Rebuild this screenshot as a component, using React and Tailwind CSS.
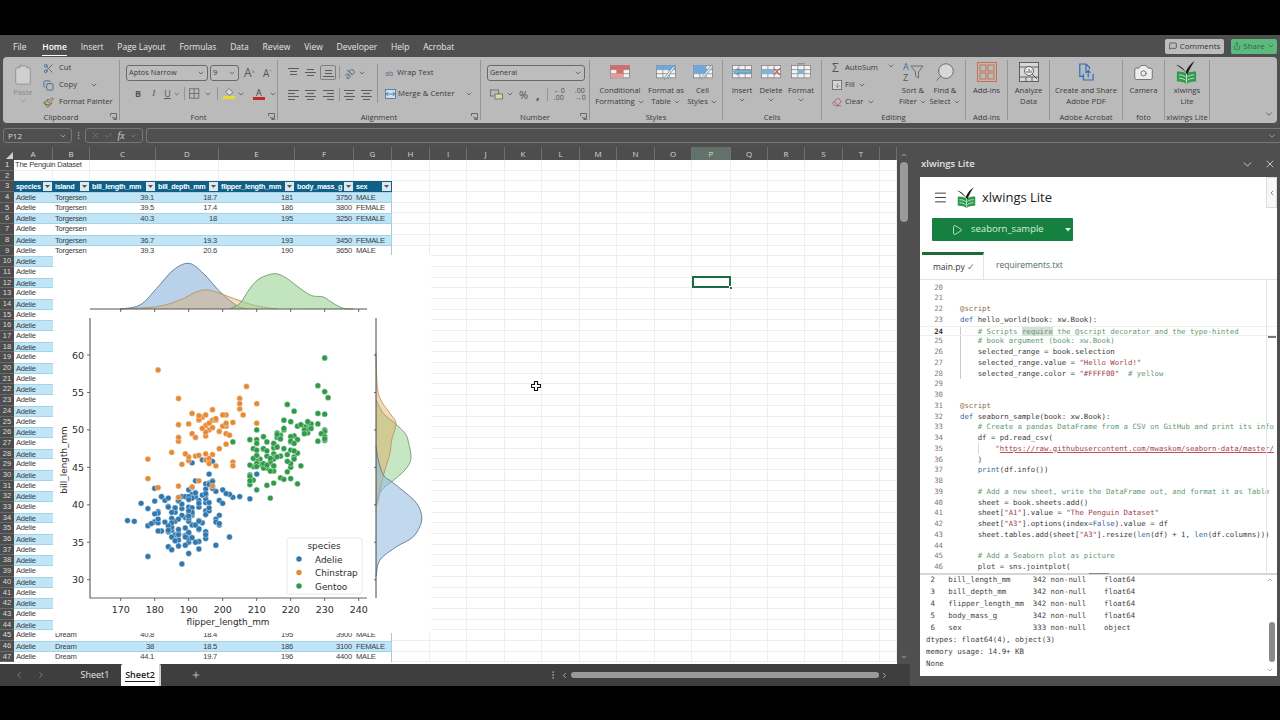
import { Scissors, Copy, Paintbrush, ChevronDown, ChevronLeft, ChevronRight, ChevronUp, X, Check, Plus, Play, Menu, MessageSquare, Share, Camera, Search, Clipboard, Eraser, ArrowDown, MoreVertical } from 'lucide-react';

// ---------- sheet data ----------
const columns = [
  ['A', 'w-[39px]'], ['B', 'w-[37px]'], ['C', 'w-[66px]'], ['D', 'w-[63px]'], ['E', 'w-[76px]'],
  ['F', 'w-[59px]'], ['G', 'w-[38px]'], ['H', 'w-[38px]'], ['I', 'w-[37px]'], ['J', 'w-[38px]'],
  ['K', 'w-[37px]'], ['L', 'w-[38px]'], ['M', 'w-[37px]'], ['N', 'w-[38px]'], ['O', 'w-[37px]'],
  ['P', 'w-[39px]'], ['Q', 'w-[37px]'], ['R', 'w-[37px]'], ['S', 'w-[38px]'], ['T', 'w-[37px]'],
  ['', 'w-[17px]'],
];
const tableHead = ['species', 'island', 'bill_length_mm', 'bill_depth_mm', 'flipper_length_mm', 'body_mass_g', 'sex'];
const tableRows = {
  4: ['Adelie', 'Torgersen', '39.1', '18.7', '181', '3750', 'MALE'],
  5: ['Adelie', 'Torgersen', '39.5', '17.4', '186', '3800', 'FEMALE'],
  6: ['Adelie', 'Torgersen', '40.3', '18', '195', '3250', 'FEMALE'],
  7: ['Adelie', 'Torgersen', '', '', '', '', ''],
  8: ['Adelie', 'Torgersen', '36.7', '19.3', '193', '3450', 'FEMALE'],
  9: ['Adelie', 'Torgersen', '39.3', '20.6', '190', '3650', 'MALE'],
  45: ['Adelie', 'Dream', '40.8', '18.4', '195', '3900', 'MALE'],
  46: ['Adelie', 'Dream', '38', '18.5', '186', '3100', 'FEMALE'],
  47: ['Adelie', 'Dream', '44.1', '19.7', '196', '4400', 'MALE'],
};
const rowNumbers = Array.from({ length: 47 }, (_, i) => i + 1);

const adelie = [[181,39.1],[186,39.5],[195,40.3],[193,36.7],[190,39.3],[181,38.9],[195,39.2],[193,34.1],[190,42],[186,37.8],[180,37.8],[182,41.1],[191,38.6],[198,34.6],[185,36.6],[195,38.7],[197,42.5],[184,34.4],[194,46],[174,37.8],[180,37.7],[189,35.9],[185,38.2],[180,38.8],[187,35.3],[183,40.6],[187,40.5],[172,37.9],[180,40.5],[178,39.5],[178,37.2],[188,39.5],[184,40.9],[195,36.4],[196,39.2],[190,38.8],[180,42.2],[181,37.6],[184,39.8],[182,36.5],[195,40.8],[186,36],[196,44.1],[185,37],[190,39.6],[182,41.1],[179,37.5],[190,36],[191,42.3],[186,39.6],[188,40.1],[190,35],[200,42],[187,34.5],[191,41.4],[186,39],[193,40.6],[181,36.5],[194,37.6],[185,35.7],[195,41.3],[185,37.6],[192,41.1],[184,36.4],[192,41.6],[195,35.5],[188,41.1],[190,35.9],[198,41.8],[190,33.5],[190,39.7],[196,39.6],[197,45.8],[190,35.5],[195,42.8],[191,40.9],[184,37.2],[187,36.2],[195,42.1],[189,34.6],[196,42.9],[187,36.7],[193,35.1],[191,37.3],[194,41.3],[190,36.3],[189,36.9],[189,38.3],[190,38.9],[202,35.7],[205,41.1],[185,34],[186,39.6],[208,40.8],[190,38.1],[196,40.3],[178,33.1],[192,43.2],[192,35],[203,41],[183,37.7],[190,37.8],[193,37.9],[184,39.7],[199,38.6],[190,38.2],[181,38.1],[197,43.2],[198,38.1],[191,45.6],[193,39.7],[197,42.2],[191,39.6],[196,42.7],[188,38.6],[199,37.3],[189,35.7],[189,41.1],[198,37.7],[176,40.2],[202,41.4],[186,35.2],[199,40.6],[191,38.8],[195,41.5],[191,39],[210,44.1],[190,38.5],[197,43.1],[193,36.8],[199,37.5],[187,38.1],[190,41.1],[191,35.6],[200,40.2],[193,39.7],[193,40.2],[187,40.6],[188,32.1],[190,40.7],[192,37.3],[185,39],[190,39.2],[184,36.6],[195,36],[193,37.8],[187,36],[201,41.5]];
const chinstrap = [[192,46.5],[196,50],[193,51.3],[188,45.4],[197,52.7],[198,45.2],[178,46.1],[197,51.3],[195,46],[198,51.3],[193,46.6],[194,51.7],[185,47],[201,52],[190,45.9],[201,50.5],[197,50.3],[181,58],[190,46.4],[195,49.2],[191,42.4],[187,48.5],[193,43.2],[195,50.6],[197,46.7],[200,52],[200,50.5],[191,49.5],[205,52.8],[187,54.2],[201,49.5],[187,42.5],[203,51],[195,49.7],[199,47.5],[195,52],[210,53.5],[192,49],[205,54.2],[210,50.9],[187,49],[196,46.2],[196,50.9],[196,45.5],[201,50.9],[190,50.8],[207,55.8],[187,41],[198,51.5],[199,49.8],[201,48.1],[193,51.4],[203,45.7],[187,50.7],[197,42.5],[191,52.2],[203,45.2],[202,49.3],[194,50.2],[205,53.5],[189,46.8],[195,46.8],[206,52],[193,51.9],[178,43.5],[181,42.3]];
const gentoo = [[211,46.1],[230,50],[210,48.7],[218,50],[215,47.6],[210,46.5],[211,45.4],[219,46.7],[209,43.3],[215,46.8],[214,40.9],[216,49],[214,45.5],[213,48.4],[210,45.8],[217,49.3],[210,42],[221,49.2],[209,46.2],[222,48.7],[218,50.2],[215,45.1],[213,46.5],[215,46.3],[215,42.9],[215,46.1],[215,44.5],[216,47.8],[215,48.2],[210,50],[220,47.3],[222,42.8],[209,45.1],[230,59.6],[220,49.1],[220,48.4],[213,42.6],[219,44.4],[208,44],[208,48.7],[208,42.7],[225,49.6],[210,45.3],[216,49.6],[222,50.5],[217,43.6],[210,45.5],[225,50.5],[213,44.9],[215,45.2],[210,46.6],[220,48.5],[210,45.1],[225,50.1],[217,46.5],[220,45],[208,43.8],[220,45.5],[208,43.2],[224,50.4],[208,45.3],[221,46.2],[214,45.7],[231,54.3],[219,45.8],[230,49.8],[214,46.2],[229,49.5],[220,43.5],[223,50.7],[216,47.7],[221,46.4],[221,48.2],[217,46.5],[216,46.4],[230,48.6],[209,47.5],[220,51.1],[215,45.2],[223,45.2],[212,49.1],[221,52.5],[212,47.4],[224,50],[212,44.9],[228,50.8],[218,43.4],[218,51.3],[212,47.5],[230,52.1],[218,47.5],[228,52.2],[212,45.5],[224,49.5],[214,44.5],[226,50.8],[216,49.4],[222,46.9],[203,48.4],[225,51.1],[228,48.5],[228,55.9],[213,47.2],[230,49.1],[210,47.3],[230,48.8],[219,53.4],[230,55.1],[221,46.1],[226,50.2],[213,45.3],[217,48.8],[221,47.2],[210,48.2]];

const px = v => 120.7 + (v - 170) * 3.4;
const py = v => 355 + (60 - v) * 7.49;

// smooth curve through points, given in [x, y] pairs of the image's own pixels
const smooth = pts => {
  let d = `M${pts[0][0]} ${pts[0][1]}`;
  for (let i = 0; i < pts.length - 1; i++) {
    const p0 = pts[i - 1] || pts[i];
    const p1 = pts[i];
    const p2 = pts[i + 1];
    const p3 = pts[i + 2] || p2;
    d += `C${p1[0] + (p2[0] - p0[0]) / 6} ${p1[1] + (p2[1] - p0[1]) / 6} ${p2[0] - (p3[0] - p1[0]) / 6} ${p2[1] - (p3[1] - p1[1]) / 6} ${p2[0]} ${p2[1]}`;
  }
  return d;
};
const topCurve = pts => pts.map(([x, y]) => [x / 3, 145 + y / 3]);
const sideCurve = pts => pts.map(([x, y]) => [80 + x / 3, 320 + y / 3]);

const topBlue = topCurve([[360,492],[420,480],[470,430],[520,375],[567,355],[610,385],[660,440],[710,482],[740,491]]);
const topOrange = topCurve([[360,492],[470,485],[540,465],[590,440],[625,435],[660,445],[700,460],[760,480],[830,492]]);
const topGreen = topCurve([[690,491],[720,475],[750,430],[780,400],[825,386],[860,400],[900,430],[935,452],[970,456],[1000,475],[1030,490],[1060,492]]);
const sideBlue = sideCurve([[888,770],[900,720],[950,680],[1000,650],[1025,600],[1010,550],[960,505],[935,485],[910,465],[895,420],[888,380]]);
const sideOrange = sideCurve([[888,100],[895,220],[930,280],[948,310],[935,360],[930,400],[915,450],[905,490],[895,540],[888,560]]);
const sideGreen = sideCurve([[888,550],[905,510],[935,485],[975,450],[993,415],[985,365],[975,340],[945,310],[910,280],[888,240]]);

// ---------- code pane ----------
const tone = {
  c: 'text-[#5e9a72]', k: 'text-[#3b5fa8]', s: 'text-[#a3424a]', d: 'text-[#8a6a42]', n: 'text-[#2f6f9f]', t: 'text-[#3a3a3a]',
  u: 'text-[#a3424a] underline decoration-[#c0504d]', h: 'text-[#5e9a72] bg-[#d5dfd8]',
};
const code = [
  [20, []], [21, []],
  [22, [['d', '@script']]],
  [23, [['k', 'def'], ['t', ' hello_world(book: xw.Book):']]],
  [24, [['c', '    # Scripts '], ['h', 'require'], ['c', ' the @script decorator and the type-hinted']]],
  [25, [['c', '    # book argument (book: xw.Book)']]],
  [26, [['t', '    selected_range = book.selection']]],
  [27, [['t', '    selected_range.value = '], ['s', '"Hello World!"']]],
  [28, [['t', '    selected_range.color = '], ['s', '"#FFFF00"'], ['c', '  # yellow']]],
  [29, []], [30, []],
  [31, [['d', '@script']]],
  [32, [['k', 'def'], ['t', ' seaborn_sample(book: xw.Book):']]],
  [33, [['c', '    # Create a pandas DataFrame from a CSV on GitHub and print its info']]],
  [34, [['t', '    df = pd.read_csv(']]],
  [35, [['s', '        "'], ['u', 'https://raw.githubusercontent.com/mwaskom/seaborn-data/master/']]],
  [36, [['t', '    )']]],
  [37, [['n', '    print'], ['t', '(df.info())']]],
  [38, []],
  [39, [['c', '    # Add a new sheet, write the DataFrame out, and format it as Table']]],
  [40, [['t', '    sheet = book.sheets.add()']]],
  [41, [['t', '    sheet['], ['s', '"A1"'], ['t', '].value = '], ['s', '"The Penguin Dataset"']]],
  [42, [['t', '    sheet['], ['s', '"A3"'], ['t', '].options(index='], ['k', 'False'], ['t', ').value = df']]],
  [43, [['t', '    sheet.tables.add(sheet['], ['s', '"A3"'], ['t', '].resize('], ['n', 'len'], ['t', '(df) + 1, '], ['n', 'len'], ['t', '(df.columns)))']]],
  [44, []],
  [45, [['c', '    # Add a Seaborn plot as picture']]],
  [46, [['t', '    plot = sns.jointplot(']]],
];
const consoleLines = [
  ' 2   bill_length_mm     342 non-null    float64',
  ' 3   bill_depth_mm      342 non-null    float64',
  ' 4   flipper_length_mm  342 non-null    float64',
  ' 5   body_mass_g        342 non-null    float64',
  ' 6   sex                333 non-null    object',
  'dtypes: float64(4), object(3)',
  'memory usage: 14.9+ KB',
  'None',
];

// ---------- small ribbon helpers ----------
const Chev = ({ className = 'text-[#444]' }) => <ChevronDown size={8} strokeWidth={2} className={className} />;

const AlignIcon = ({ rows }) => (
  <svg width="13" height="11" viewBox="0 0 13 11" stroke="#5a5a5a" strokeWidth="1">
    {rows.map(([x1, x2, y]) => <line key={y} x1={x1} x2={x2} y1={y + 0.5} y2={y + 0.5} />)}
  </svg>
);
const alignSet = {
  top: [[1, 12, 1], [3, 10, 4], [3, 10, 7]],
  mid: [[3, 10, 2], [1, 12, 5], [3, 10, 8]],
  bot: [[3, 10, 3], [3, 10, 6], [1, 12, 9]],
  left: [[1, 12, 1], [1, 8, 4], [1, 12, 7], [1, 8, 10]],
  center: [[1, 12, 1], [3, 10, 4], [1, 12, 7], [3, 10, 10]],
  right: [[1, 12, 1], [5, 12, 4], [1, 12, 7], [5, 12, 10]],
};

const TableIcon = ({ children }) => (
  <svg width="22" height="18" viewBox="0 0 30 24">{children}</svg>
);
const Cells = ({ fill = '#f2f2f2' }) => (
  <g>
    <rect x="2" y="3" width="26" height="17" fill={fill} stroke="#666" strokeWidth="0.8" />
    <path d="M2 8.7h26M2 14.3h26M10.7 3v17M19.3 3v17" stroke="#666" strokeWidth="0.8" />
  </g>
);

const BigBtn = ({ icon, lines, chevron, className = '', chevronAlone }) => (
  <div className={`flex flex-col items-center shrink-0 ${className}`}>
    <div className="h-[24px] flex items-center justify-center">{icon}</div>
    <div className="mt-[1px] flex flex-col items-center text-[7.7px] leading-[11px] text-[#3a3a3a] whitespace-nowrap">
      {lines.map((l, i) => (
        <div key={l} className="flex items-center gap-[2px]">
          {l}{chevron && i === lines.length - 1 && <Chev />}
        </div>
      ))}
      {chevronAlone && <Chev />}
    </div>
  </div>
);

const Group = ({ className, label, launcher, children }) => (
  <div className={`relative mt-[3px] mb-[3px] flex flex-col shrink-0 border-r border-[#959595] ${className}`}>
    <div className="flex-1 min-h-0">{children}</div>
    <div className="h-[6px] text-center text-[7.7px] leading-[6px] text-[#3a3a3a] whitespace-nowrap">{label}</div>
    {launcher && (
      <svg className="absolute right-[2px] bottom-0" width="7" height="7" viewBox="0 0 7 7" fill="none" stroke="#555" strokeWidth="0.8">
        <path d="M0.5 3V0.5H6.5V6.5H4M2 4l3 2M5 4v2H3" />
      </svg>
    )}
  </div>
);

const Select = ({ children, className }) => (
  <div className={`h-[16px] flex items-center justify-between px-[2px] rounded-[3px] border border-[#6a6a6a] bg-[#bdbdbd] text-[7.4px] text-[#3a3a3a] ${className}`}>
    <span>{children}</span><Chev />
  </div>
);

const Logo = ({ size = 24 }) => (
  <svg width={size} height={size} viewBox="0 0 24 24">
    <path d="M2 11c3.500-.5 7 .3 10 2.200C15 11.300 18.500 10.500 22 11v10.500c-3.500-.5-7 .3-10 2.200-3-1.900-6.500-2.700-10-2.200z" fill="#2e9a4c" />
    <path d="M12 13v10M4 14.500c3 0 5 .7 7 2M4 18c3 0 5 .7 7 2M20 14.500c-3 0-5 .7-7 2M20 18c-3 0-5 .7-7 2" stroke="#d9efe0" strokeWidth="0.9" fill="none" />
    <path d="M1 4c4 .5 7 3 10 7.500C13 7 16 3 20.500 0c-2.500 3.500-5 8-7.500 14C9.500 10 5.500 6.500 1 4z" fill="#1c1c1c" />
  </svg>
);

function Ribbon() {
  return (
    <div className="mx-[3px] h-[66px] rounded-[4px] bg-[#bababa] flex shrink-0">
      <Group className="w-[117px]" label="Clipboard" launcher>
        <div className="flex pt-[2px]">
          <div className="w-[40px] pt-[2px] flex flex-col items-center text-[7.4px] text-[#8a8a8a]">
            <Clipboard size={22} strokeWidth={1} className="text-[#8d8d8d] fill-[#cfcfcf]" />
            <span className="mt-[1px] leading-[10px]">Paste</span>
            <Chev className="text-[#8a8a8a]" />
          </div>
          <div className="flex flex-col gap-[5px] text-[7.7px] text-[#3a3a3a]">
            <div className="h-[12px] flex items-center gap-[5px]"><Scissors size={11} className="text-[#4a6a8a]" /><span>Cut</span></div>
            <div className="h-[12px] flex items-center gap-[5px]"><Copy size={11} className="text-[#4a6a8a]" /><span>Copy</span><span className="ml-[8px]"><Chev /></span></div>
            <div className="h-[12px] flex items-center gap-[5px]"><Paintbrush size={11} className="text-[#77652c]" /><span>Format Painter</span></div>
          </div>
        </div>
      </Group>

      <Group className="w-[158px]" label="Font" launcher>
        <div className="pl-[6px] pt-[5px] flex items-center gap-[2px]">
          <Select className="w-[82px]">Aptos Narrow</Select>
          <Select className="w-[29px]">9</Select>
          <span className="ml-[3px] text-[12px] leading-none text-[#555]">A<sup className="text-[6px]">^</sup></span>
          <span className="ml-[6px] text-[10px] leading-none text-[#555]">A<sup className="text-[6px]">ˇ</sup></span>
        </div>
        <div className="pl-[10px] pt-[6px] flex items-center text-[9px] text-[#555]">
          <span className="w-[17px] text-center font-bold">B</span>
          <span className="w-[17px] text-center italic" style={{ fontFamily: '"Liberation Serif", serif' }}>I</span>
          <span className="w-[12px] text-center underline">U</span>
          <Chev />
          <span className="w-px h-[13px] bg-[#949494] mx-[3px]" />
          <svg className="ml-[2px]" width="11" height="11" viewBox="0 0 11 11" fill="none" stroke="#666" strokeWidth="0.9"><rect x="0.5" y="0.5" width="10" height="10" /><path d="M5.500.5v10M.5 5.500h10" /></svg>
          <span className="ml-[4px]"><Chev /></span>
          <span className="w-px h-[13px] bg-[#949494] mx-[5px]" />
          <div className="flex flex-col items-center w-[13px]">
            <svg width="10" height="8" viewBox="0 0 10 8"><path d="M5 .5 9 4.500 5.500 7.500 1.500 4z" fill="#d8d8d8" stroke="#666" strokeWidth="0.8" /></svg>
            <div className="w-[12px] h-[3px] bg-[#e6dd30]" />
          </div>
          <span className="ml-[2px]"><Chev /></span>
          <div className="ml-[8px] flex flex-col items-center w-[13px] leading-[9px]">
            <span className="text-[9px] text-[#444]">A</span>
            <div className="w-[12px] h-[3px] bg-[#c8242b]" />
          </div>
          <span className="ml-[4px]"><Chev /></span>
        </div>
      </Group>

      <Group className="w-[203px]" label="Alignment" launcher>
        <div className="flex">
          <div className="pl-[8px] pt-[5px] flex flex-col gap-[7px]">
            <div className="flex items-center h-[15px] gap-[3px]">
              <div className="w-[14px] flex justify-center"><AlignIcon rows={alignSet.top} /></div>
              <div className="w-[14px] flex justify-center"><AlignIcon rows={alignSet.mid} /></div>
              <div className="w-[16px] h-[15px] flex items-center justify-center rounded-[2px] border border-[#7f7f7f]"><AlignIcon rows={alignSet.bot} /></div>
              <span className="w-px h-[13px] bg-[#949494]" />
              <span className="text-[10px] text-[#4a6a8a] leading-none -rotate-45">ab</span>
              <Chev />
            </div>
            <div className="flex items-center h-[15px] gap-[3px]">
              <div className="w-[14px] flex justify-center"><AlignIcon rows={alignSet.left} /></div>
              <div className="w-[14px] flex justify-center"><AlignIcon rows={alignSet.center} /></div>
              <div className="w-[16px] flex justify-center"><AlignIcon rows={alignSet.right} /></div>
              <span className="w-px h-[13px] bg-[#949494]" />
              <div className="flex justify-center"><AlignIcon rows={alignSet.center} /></div>
              <div className="ml-[1px] flex justify-center"><AlignIcon rows={alignSet.center} /></div>
            </div>
          </div>
          <div className="ml-[4px] mt-[4px] w-px h-[39px] bg-[#949494] shrink-0" />
          <div className="ml-[7px] pt-[7px] flex flex-col gap-[9px] text-[7.7px] text-[#3a3a3a] whitespace-nowrap">
            <div className="flex items-center gap-[2px] h-[12px]">
              <span className="w-[10px] text-[7px] leading-none text-[#4a6a8a]">ab</span><span>Wrap Text</span>
            </div>
            <div className="flex items-center gap-[2px] h-[12px]">
              <svg width="11" height="10" viewBox="0 0 11 10" fill="#cfe0ee" stroke="#3f6f9f" strokeWidth="0.8"><rect x=".5" y=".5" width="10" height="9" /><path d="M.5 5h10M3 3 1.500 5 3 7M8 3l1.500 2L8 7" fill="none" /></svg>
              <span>Merge &amp; Center</span>
              <span className="ml-[8px]"><Chev /></span>
            </div>
          </div>
        </div>
      </Group>

      <Group className="w-[109px]" label="Number" launcher>
        <div className="pl-[6px] pt-[5px]">
          <Select className="w-[98px]">General</Select>
          <div className="pt-[6px] pl-[3px] flex items-center text-[#4f4f4f]">
            <svg width="13" height="11" viewBox="0 0 13 11" fill="none" stroke="#666" strokeWidth="0.8"><rect x=".5" y="1" width="8" height="6" /><rect x="5" y="5" width="7.500" height="5" fill="#d8d8a8" /></svg>
            <span className="ml-[3px]"><Chev /></span>
            <span className="ml-[5px] text-[11px] leading-none">%</span>
            <span className="ml-[8px] text-[13px] leading-none font-bold">,</span>
            <span className="ml-[7px] w-px h-[13px] bg-[#949494]" />
            <span className="ml-[6px] text-[7px] leading-[7px] w-[14px]">←0<br />.00</span>
            <span className="ml-[7px] text-[7px] leading-[7px] w-[14px]">.00<br />→0</span>
          </div>
        </div>
      </Group>

      <Group className="w-[133px]" label="Styles">
        <div className="flex">
          <BigBtn className="w-[60px]" lines={['Conditional', 'Formatting']} chevron icon={
            <TableIcon><Cells /><rect x="2" y="3" width="26" height="5.500" fill="#d9686a" /><rect x="10.700" y="8.700" width="8.600" height="5.600" fill="#d9686a" /><rect x="2" y="14.300" width="17" height="5.700" fill="#e89a9a" /></TableIcon>
          } />
          <BigBtn className="w-[32px]" lines={['Format as', 'Table']} chevron icon={
            <TableIcon><Cells /><rect x="2" y="3" width="26" height="5.500" fill="#6fa8dc" /><path d="M27 6 16 20l-3 2 1-4L25 4z" fill="#dfe9f2" stroke="#4f7f9f" strokeWidth="0.8" /></TableIcon>
          } />
          <BigBtn className="w-[41px]" lines={['Cell', 'Styles']} chevron icon={
            <TableIcon><Cells /><rect x="2" y="3" width="17" height="11" fill="#6fa8dc" /><path d="M27 6 16 20l-3 2 1-4L25 4z" fill="#dfe9f2" stroke="#4f7f9f" strokeWidth="0.8" /></TableIcon>
          } />
        </div>
      </Group>

      <Group className="w-[99px]" label="Cells">
        <div className="flex">
          <BigBtn className="w-[38px]" lines={['Insert']} chevronAlone icon={
            <TableIcon><Cells /><path d="M3 11.500 9 7v2.500h18v4H9V16z" fill="#7fb3d8" stroke="#3f7fa8" strokeWidth="0.8" /></TableIcon>
          } />
          <BigBtn className="w-[20px]" lines={['Delete']} chevronAlone icon={
            <TableIcon><Cells /><rect x="2" y="8.700" width="17" height="5.600" fill="#7fb3d8" /><path d="M19 7l8 9M27 7l-8 9" stroke="#c25a5a" strokeWidth="1.500" /></TableIcon>
          } />
          <BigBtn className="w-[40px]" lines={['Format']} chevronAlone icon={
            <TableIcon><Cells /><rect x="10.700" y="8.700" width="8.600" height="5.600" fill="#7fb3d8" /><path d="M10 .8h10" stroke="#555" strokeWidth="0.8" /></TableIcon>
          } />
        </div>
      </Group>

      <Group className="w-[144px]" label="Editing">
        <div className="flex">
          <div className="w-[70px] pt-[2px] pl-[10px] flex flex-col gap-[5px] text-[7.7px] text-[#3a3a3a] shrink-0">
            <div className="h-[12px] flex items-center gap-[3px]"><span className="w-[10px] text-[12px] leading-none text-[#555]">Σ</span><span>AutoSum</span></div>
            <div className="h-[12px] flex items-center gap-[3px]"><span className="w-[10px] h-[10px] flex items-center justify-center border border-[#777] bg-[#d4d4d4]"><ArrowDown size={7} className="text-[#3f6f9f]" /></span><span>Fill</span><Chev /></div>
            <div className="h-[12px] flex items-center gap-[3px]"><Eraser size={10} className="text-[#b0526a]" /><span>Clear</span><Chev /></div>
          </div>
          <div className="w-[5px] pt-[2px] -ml-[5px]"><Chev /></div>
          <BigBtn className="w-[42px]" lines={['Sort &', 'Filter']} chevron icon={
            <svg width="22" height="24" viewBox="0 0 22 24" fill="none"><text x="1" y="10" fontSize="9" fill="#3f6f9f">A</text><text x="1" y="21" fontSize="9" fill="#555">Z</text><path d="M9 6h12l-4.500 6v6l-3-2v-4z" stroke="#666" strokeWidth="0.9" /></svg>
          } />
          <BigBtn className="w-[22px]" lines={['Find &', 'Select']} chevron icon={
            <Search size={22} strokeWidth={1} className="text-[#666] -scale-x-100 fill-[#d8d8d8]" />
          } />
        </div>
      </Group>

      <Group className="w-[42px]" label="Add-ins">
        <div className="flex justify-center">
          <BigBtn lines={['Add-ins']} icon={
            <svg width="20" height="20" viewBox="0 0 20 20" fill="none" stroke="#c9714f" strokeWidth="1"><rect x=".5" y=".5" width="19" height="19" /><rect x="3" y="3" width="6" height="6" /><rect x="11" y="3" width="6" height="6" /><rect x="3" y="11" width="6" height="6" /><rect x="11" y="11" width="6" height="6" /></svg>
          } />
        </div>
      </Group>

      <Group className="w-[42px]" label="">
        <div className="flex justify-center">
          <BigBtn lines={['Analyze', 'Data']} icon={
            <svg width="20" height="20" viewBox="0 0 20 20" fill="#d8d8d8" stroke="#555" strokeWidth="0.9"><rect x=".5" y=".5" width="19" height="19" /><path d="M.5 5h19M.5 15h19M7 15v4.500M13 15v4.500" /><circle cx="10" cy="9" r="4.500" fill="#ececec" /><path d="M8 11V9M10 11V7M12 11V8.500M13 12l5 5" /></svg>
          } />
        </div>
      </Group>

      <Group className="w-[73px]" label="Adobe Acrobat">
        <div className="flex justify-center">
          <BigBtn lines={['Create and Share', 'Adobe PDF']} icon={
            <svg width="16" height="18" viewBox="0 0 18 20" fill="none" stroke="#2b6cc4" strokeWidth="1.300"><path d="M9 11V1H2v14h4M9 1l4 4v2" /><path d="M6 12v7h11v-7M11.500 16V9M9 11l2.500-2.500L14 11" /></svg>
          } />
        </div>
      </Group>

      <Group className="w-[42px]" label="foto">
        <div className="flex justify-center">
          <BigBtn lines={['Camera']} icon={<Camera size={21} strokeWidth={1} className="text-[#666] fill-[#ededed]" />} />
        </div>
      </Group>

      <Group className="w-[45px]" label="xlwings Lite">
        <div className="flex justify-center">
          <BigBtn lines={['xlwings', 'Lite']} icon={<Logo size={23} />} />
        </div>
      </Group>

      <div className="flex-1 flex items-end justify-end pr-[3px] pb-[4px]"><ChevronDown size={10} className="text-[#555]" /></div>
    </div>
  );
}

function Chart() {
  const xs = [170, 180, 190, 200, 210, 220, 230, 240];
  const ys = [30, 35, 40, 45, 50, 55, 60];
  const dots = (list, fill) => list.map(([x, y], i) => (
    <circle key={i} cx={px(x)} cy={py(y)} r="2.900" fill={fill} stroke="#fff" strokeWidth="0.4" />
  ));
  return (
    <svg className="absolute left-[53px] top-[95px] bg-white" width="378" height="378" viewBox="53 255 378 378" fontFamily='"DejaVu Sans", sans-serif' fill="#2b2b2b">
      <path d={smooth(topBlue)} fill="#9dbfe0" fillOpacity="0.7" stroke="#587b95" strokeWidth="0.9" />
      <path d={smooth(topOrange)} fill="#e0a050" fillOpacity="0.35" stroke="#b59468" strokeWidth="0.9" />
      <path d={smooth(topGreen)} fill="#8fd08a" fillOpacity="0.55" stroke="#6f9a6f" strokeWidth="0.9" />
      <line x1="90" x2="367" y1="309" y2="309" stroke="#555" strokeWidth="1" />
      {xs.map(v => <line key={v} x1={px(v)} x2={px(v)} y1="309" y2="312" stroke="#444" strokeWidth="0.8" />)}

      <path d={smooth(sideGreen)} fill="#8fd08a" fillOpacity="0.5" stroke="#6f9a6f" strokeWidth="0.9" />
      <path d={smooth(sideOrange)} fill="#e0a050" fillOpacity="0.4" stroke="#b59468" strokeWidth="0.9" />
      <path d={smooth(sideBlue)} fill="#8fb8dc" fillOpacity="0.55" stroke="#587b95" strokeWidth="0.9" />
      <line x1="376" x2="376" y1="318" y2="598" stroke="#444" strokeWidth="1" />
      {ys.map(v => <line key={v} x1="374" x2="376" y1={py(v)} y2={py(v)} stroke="#444" strokeWidth="0.8" />)}

      <path d="M90 318V598H367" fill="none" stroke="#666" strokeWidth="1.200" />
      {xs.map(v => <line key={v} x1={px(v)} x2={px(v)} y1="598" y2="601" stroke="#444" strokeWidth="0.8" />)}
      {ys.map(v => <line key={v} x1="87" x2="90" y1={py(v)} y2={py(v)} stroke="#444" strokeWidth="0.8" />)}
      {xs.map(v => <text key={v} x={px(v)} y="613" fontSize="9.500" textAnchor="middle">{v}</text>)}
      {ys.map(v => <text key={v} x="84" y={py(v) + 3.500} fontSize="9.500" textAnchor="end">{v}</text>)}
      <text x="228" y="625" fontSize="8.900" textAnchor="middle">flipper_length_mm</text>
      <text x="67" y="460" fontSize="8.900" textAnchor="middle" transform="rotate(-90 67 460)">bill_length_mm</text>

      {dots(adelie, '#2f77ad')}
      {dots(chinstrap, '#e58b38')}
      {dots(gentoo, '#2f9a48')}

      <rect x="287" y="538" width="75" height="56" rx="2" fill="#fff" fillOpacity="0.85" stroke="#e2e2e2" strokeWidth="0.8" />
      <text x="324" y="549" fontSize="8.900" textAnchor="middle">species</text>
      <circle cx="299" cy="559" r="2.700" fill="#2f77ad" />
      <text x="315" y="562.500" fontSize="8.900">Adelie</text>
      <circle cx="299" cy="572.500" r="2.700" fill="#e58b38" />
      <text x="315" y="576" fontSize="8.900">Chinstrap</text>
      <circle cx="299" cy="586" r="2.700" fill="#2f9a48" />
      <text x="315" y="589.500" fontSize="8.900">Gentoo</text>
    </svg>
  );
}

function Sheet() {
  return (
    <div className="relative flex-1 min-h-0 overflow-hidden bg-white" style={{ fontFamily: '"Liberation Sans", sans-serif' }}>
      {rowNumbers.map(r => {
        const row = tableRows[r];
        const inTable = r >= 4;
        const band = r >= 4 && r % 2 === 0;
        return (
          <div key={r} className="flex h-[10.7px] text-[7.6px] leading-[10.7px] text-[#3d3d3d] tracking-[-0.25px]">
            <div className="w-[14px] shrink-0 bg-[#4d4d4d] border-b border-[#6a6a6a] text-center text-[#dcdcdc] tracking-normal">{r}</div>
            {columns.map(([name, w], c) => {
              let body = null;
              let cls = 'border-r border-b border-[#eeeeee]';
              if (c < 7 && r === 3) {
                cls = 'bg-[#0f5f86] text-white font-bold flex items-center justify-between pl-[2px] pr-[1px] overflow-hidden text-[7.2px] tracking-[-0.25px]';
                body = <><span className="whitespace-nowrap">{tableHead[c]}</span><span className="shrink-0 w-[9px] h-[9px] bg-[#dfe8ed] flex items-center justify-center"><svg width="5" height="3" viewBox="0 0 5 3"><path d="M0 0h5L2.500 3z" fill="#555" /></svg></span></>;
              } else if (c < 7 && inTable) {
                cls = `${band ? 'bg-[#bfe5f7] border-y border-[#a4d3e8]' : 'bg-white'} ${c === 6 ? 'border-r border-[#9ccbe0]' : ''} px-[2px] overflow-hidden whitespace-nowrap`;
                const val = row ? row[c] : c === 0 ? 'Adelie' : '';
                const right = c >= 2 && c <= 5;
                body = <div className={right ? 'text-right' : ''}>{val}</div>;
              } else if (c === 0 && r === 1) {
                cls = 'border-b border-[#eeeeee] whitespace-nowrap px-[1px]';
                body = 'The Penguin Dataset';
              }
              return <div key={name + c} className={`${w} shrink-0 box-border h-[10.7px] leading-[9.7px] ${cls}`}>{body}</div>;
            })}
          </div>
        );
      })}
      <Chart />
      {/* selected cell */}
      <div className="absolute left-[692px] top-[116px] w-[39px] h-[12px] border-2 border-[#1c6b43]" />
      <div className="absolute left-[729px] top-[126px] w-[4px] h-[4px] bg-[#1c6b43] border border-white" />
      {/* pointer */}
      <svg className="absolute left-[531px] top-[221px]" width="10" height="10" viewBox="0 0 10 10"><path d="M3.500.5h3v3h3v3h-3v3h-3v-3h-3v-3h3z" fill="#fff" stroke="#111" strokeWidth="1.100" /></svg>
    </div>
  );
}

function CodePane() {
  return (
    <div className="relative h-[293px] overflow-hidden bg-white pt-[2.500px] text-[7.35px]" style={{ fontFamily: '"DejaVu Sans Mono", monospace' }}>
      {code.map(([n, parts]) => (
        <div key={n} className={`flex h-[10.75px] leading-[10.75px] whitespace-pre ${n === 24 ? 'border-y border-[#efefef]' : ''}`}>
          <div className={`w-[23px] shrink-0 text-right ${n === 24 ? 'text-[#333] font-bold' : 'text-[#7a7a7a]'}`}>{n}</div>
          <div className={`ml-[17px] ${n >= 24 && n <= 28 ? 'shadow-[inset_1px_0_0_#c9c9c9]' : ''}`}>
            {parts.map(([k, t], i) => <span key={i} className={tone[k]}>{t}</span>)}
          </div>
        </div>
      ))}
      <div className="absolute right-[10px] top-0 bottom-0 w-px bg-[#e6e6e6]" />
      <div className="absolute right-[1px] top-[56px] w-[8px] h-[2px] bg-[#777]" />
      <div className="absolute left-[58px] top-[163px] h-[11px] w-px bg-[#d9d9d9]" />
    </div>
  );
}

function Pane() {
  return (
    <div className="w-[357px] mt-[8px] shrink-0 flex flex-col">
      <div className="h-[22px] pb-[4px] flex items-center justify-between pl-[1px] pr-[1px] text-[9.500px] font-semibold text-[#e4e4e4]" style={{ fontFamily: '"Open Sans", sans-serif' }}>
        <span>xlwings Lite</span>
        <span className="flex items-center gap-[10px]"><ChevronDown size={13} strokeWidth={1.5} /><X size={12} strokeWidth={1.5} /></span>
      </div>
      <div className="h-[499px] bg-white flex flex-col" style={{ fontFamily: '"Open Sans", sans-serif' }}>
        <div className="relative h-[41px] flex items-center pl-[13px] shrink-0">
          <Menu size={15} strokeWidth={1.5} className="text-[#333]" />
          <div className="ml-[8px]"><Logo size={21} /></div>
          <span className="ml-[5px] text-[13px] leading-none text-[#222]">xlwings Lite</span>
          <div className="absolute right-0 top-0 w-[11px] h-[31px] flex items-center justify-center border border-[#dddddd] bg-[#f7f7f7]"><ChevronLeft size={8} className="text-[#555]" /></div>
        </div>
        <div className="ml-[12px] h-[23px] w-[141px] rounded-[1px] bg-[#15803f] flex items-center text-[#d9f0e0] text-[9.500px] shrink-0">
          <Play size={12} strokeWidth={1.6} className="ml-[19px]" />
          <span className="ml-[8px]">seaborn_sample</span>
          <svg className="ml-[21px]" width="6" height="4" viewBox="0 0 6 4"><path d="M0 0h6L3 3.500z" fill="#e4f4ea" /></svg>
        </div>
        <div className="mt-[11px] h-[28px] flex border-b border-[#e4e4e4] text-[8.500px] shrink-0">
          <div className="ml-[2px] w-[62px] border-t-[3px] border-t-[#1f6b38] border-r border-[#e4e4e4] flex items-center pl-[11px] text-[#333]">main.py<span className="ml-[2px] text-[#777]">✓</span></div>
          <div className="pl-[12px] flex items-center text-[#4d6a5d] pb-[1px]">requirements.txt</div>
        </div>
        <CodePane />
        <div className="relative h-[2px] bg-[#d6d6d6] shrink-0"><div className="absolute left-[169px] w-[20px] h-[1px] bg-[#8a8a8a]" /></div>
        <div className="relative flex-1 min-h-0 overflow-hidden pl-[6px] text-[7.4px] text-[#444]" style={{ fontFamily: '"DejaVu Sans Mono", monospace' }}>
          <div className="-mt-[1px]">
            {consoleLines.map(l => <div key={l} className="h-[12px] leading-[12px] whitespace-pre">{l}</div>)}
          </div>
          <ChevronUp size={8} className="absolute right-[3px] top-[1px] text-[#888]" />
          <div className="absolute right-[2px] top-[47px] w-[6px] h-[40px] rounded-full bg-[#8a8a8a]" />
          <ChevronDown size={8} className="absolute right-[3px] bottom-[2px] text-[#888]" />
        </div>
      </div>
    </div>
  );
}

const App = () => {
  const tabs = ['File', 'Home', 'Insert', 'Page Layout', 'Formulas', 'Data', 'Review', 'View', 'Developer', 'Help', 'Acrobat'];
  return (
    <div className="w-[1280px] h-[720px] flex flex-col overflow-hidden bg-black" style={{ fontFamily: '"Open Sans", "Liberation Sans", sans-serif' }}>
      <div className="h-[35px] shrink-0" />
      <div className="flex-1 min-h-0 flex flex-col bg-[#4f4f4f]">
        {/* menu tabs */}
        <div className="h-[22px] pt-[2px] shrink-0 flex items-center pl-[13px] text-[8.5px] text-[#e6e6e6]">
          {tabs.map(t => (
            <div key={t} className={`relative mr-[13.800px] whitespace-nowrap ${t === 'Home' ? 'ml-[2px] font-semibold text-white' : ''}`}>
              {t}
              {t === 'Home' && <div className="absolute left-0 right-0 -bottom-[3px] h-[1px] bg-white" />}
            </div>
          ))}
          <div className="ml-auto flex items-center gap-[7px] pr-[3px] -mt-[2px] text-[8px]">
            <div className="h-[15px] w-[59px] rounded-[2px] bg-[#bdbdbd] flex items-center justify-center gap-[3px] text-[#333]"><MessageSquare size={8} />Comments</div>
            <div className="h-[15px] w-[46px] rounded-[2px] bg-[#5cba7d] flex items-center justify-center gap-[2px] text-[#2f5f42]"><Share size={8} />Share<Chev className="text-[#2f5f42]" /></div>
          </div>
        </div>
        <Ribbon />
        {/* formula bar */}
        <div className="mt-[5px] h-[15px] shrink-0 flex items-center text-[8px] text-[#d8d8d8]">
          <div className="ml-[3px] w-[69px] h-[15px] rounded-[3px] border border-[#777] flex items-center justify-between px-[4px]">P12<Chev className="text-[#bbb]" /></div>
          <MoreVertical size={9} className="ml-[2px] text-[#aaa]" />
          <div className="ml-[2px] w-[58px] h-[15px] rounded-[3px] border border-[#777] flex items-center justify-around px-[3px] text-[#7a7a7a]">
            <X size={9} /><Check size={9} />
            <span className="italic text-[10px] text-[#cfcfcf]" style={{ fontFamily: '"Liberation Serif", serif' }}>fx</span>
            <Chev className="text-[#888]" />
          </div>
          <div className="ml-[3px] flex-1 h-[15px] rounded-l-[3px] border-y border-l border-[#777] flex items-center justify-end pr-[3px]"><ChevronDown size={10} className="text-[#aaa]" /></div>
        </div>
        {/* work area */}
        <div className="mt-[4px] flex-1 min-h-0 flex">
          <div className="w-[910px] shrink-0 flex flex-col">
            <div className="flex flex-1 min-h-0">
              <div className="w-[897px] flex flex-col shrink-0">
                <div className="h-[13px] flex shrink-0 text-[8px] leading-[13px] text-[#d6d6d6] bg-[#4d4d4d]">
                  <div className="w-[14px] shrink-0 flex items-end justify-end"><div className="w-0 h-0 border-l-[7px] border-l-transparent border-b-[7px] border-b-[#cfcfcf] mr-[1px] mb-[1px]" /></div>
                  {columns.map(([name, w]) => (
                    <div key={name || 'u'} className={`${w} shrink-0 text-center border-r border-[#6f6f6f] ${name === 'P' ? 'bg-[#62726a]' : ''}`}>{name}</div>
                  ))}
                </div>
                <Sheet />
              </div>
              <div className="w-[13px] flex flex-col items-center shrink-0 pt-[4px]">
                <ChevronUp size={8} className="text-[#ccc]" />
                <div className="mt-[3px] w-[8px] h-[60px] rounded-full bg-[#9a9a9a]" />
                <div className="flex-1" />
                <ChevronDown size={8} className="text-[#ccc] mb-[3px]" />
              </div>
            </div>
            {/* sheet tabs */}
            <div className="h-[22px] shrink-0 bg-[#3e3e3e] flex items-center text-[9px] text-[#e8e8e8]">
              <ChevronLeft size={10} className="ml-[14px] text-[#888]" />
              <ChevronRight size={10} className="ml-[12px] text-[#888]" />
              <span className="ml-[29px] w-[40px] text-center">Sheet1</span>
              <div className="ml-[6px] h-[22px] w-[40px] bg-white text-[#222] font-semibold flex items-center justify-center rounded-t-[2px] border-r-2 border-[#cfcfcf]">
                <span className="border-b border-[#222]">Sheet2</span>
              </div>
              <Plus size={10} className="ml-[30px] text-[#cfcfcf]" />
              <MoreVertical size={10} className="ml-[347px] text-[#aaa]" />
              <ChevronLeft size={9} className="ml-[2px] text-[#ccc]" />
              <div className="ml-[2px] w-[308px] h-[6px] rounded-full bg-[#9a9a9a]" />
              <ChevronRight size={9} className="ml-[1px] text-[#ccc]" />
            </div>
          </div>
          <div className="w-[10px] shrink-0" />
          <Pane />
        </div>
      </div>
      <div className="h-[34px] shrink-0" />
    </div>
  );
}

export default App;
